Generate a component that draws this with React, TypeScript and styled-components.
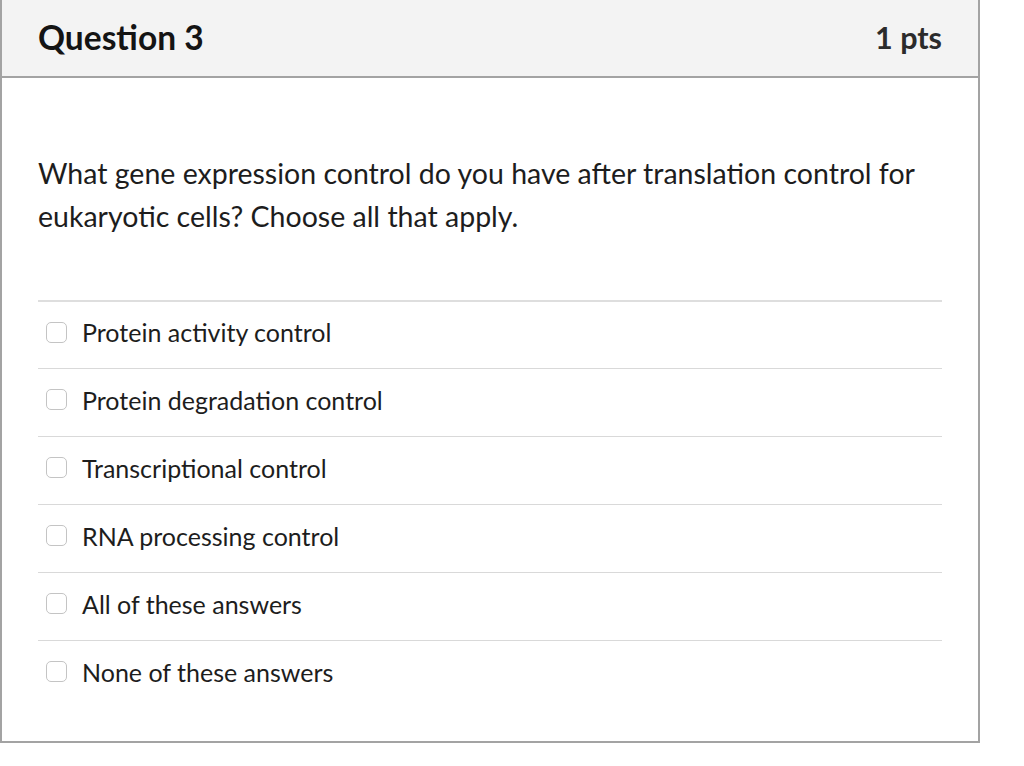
import React from "react";
import styled, { createGlobalStyle } from "styled-components";

const GlobalStyle = createGlobalStyle`
  html, body {
    margin: 0;
    padding: 0;
    background: #ffffff;
  }
  body {
    font-family: Lato, "Open Sans", "Liberation Sans", sans-serif;
    color: #1d1d1d;
  }
`;

const answers = [
  "Protein activity control",
  "Protein degradation control",
  "Transcriptional control",
  "RNA processing control",
  "All of these answers",
  "None of these answers",
];

const App: React.FC = () => {
  return (
    <>
      <GlobalStyle />
      <Card>
        <Header>
          <Title>Question 3</Title>
          <Points>1 pts</Points>
        </Header>
        <Body>
          <QuestionText>
            What gene expression control do you have after translation control
            for eukaryotic cells? Choose all that apply.
          </QuestionText>
          <AnswerList>
            {answers.map((answer) => (
              <AnswerRow key={answer}>
                <Checkbox type="checkbox" />
                <AnswerLabel>{answer}</AnswerLabel>
              </AnswerRow>
            ))}
          </AnswerList>
        </Body>
      </Card>
    </>
  );
};

const Card = styled.div`
  width: 980px;
  box-sizing: border-box;
  border: 2px solid #a3a3a3;
  border-top: none;
  background: #ffffff;
`;

const Header = styled.header`
  height: 78px;
  box-sizing: border-box;
  display: flex;
  align-items: center;
  justify-content: space-between;
  padding: 0 36px 2px 36px;
  background: #f3f3f3;
  border-bottom: 2px solid #a3a3a3;
`;

const Title = styled.h2`
  margin: 0;
  font-size: 33.5px;
  font-weight: 700;
  color: #141414;
`;

const Points = styled.span`
  font-size: 30.5px;
  font-weight: 700;
  color: #2b2b2b;
`;

const Body = styled.div`
  padding: 74px 36px 33px 36px;
`;

const QuestionText = styled.p`
  margin: 0 0 62px 0;
  font-size: 28.5px;
  line-height: 43px;
  color: #1d1d1d;
`;

const AnswerList = styled.div`
  display: flex;
  flex-direction: column;
`;

const AnswerRow = styled.label`
  display: flex;
  align-items: center;
  gap: 15px;
  height: 68px;
  box-sizing: border-box;
  padding: 0 0 6px 8px;
  border-top: 1px solid #d9d9d9;

  &:first-child {
    border-top: 2px solid #dedede;
  }
`;

const Checkbox = styled.input`
  appearance: none;
  margin: 0;
  width: 21px;
  height: 21px;
  box-sizing: border-box;
  border: 1.5px solid #c4c4c4;
  border-radius: 5px;
  background: #ffffff;
`;

const AnswerLabel = styled.span`
  font-size: 25px;
  color: #1d1d1d;
`;

export default App;
